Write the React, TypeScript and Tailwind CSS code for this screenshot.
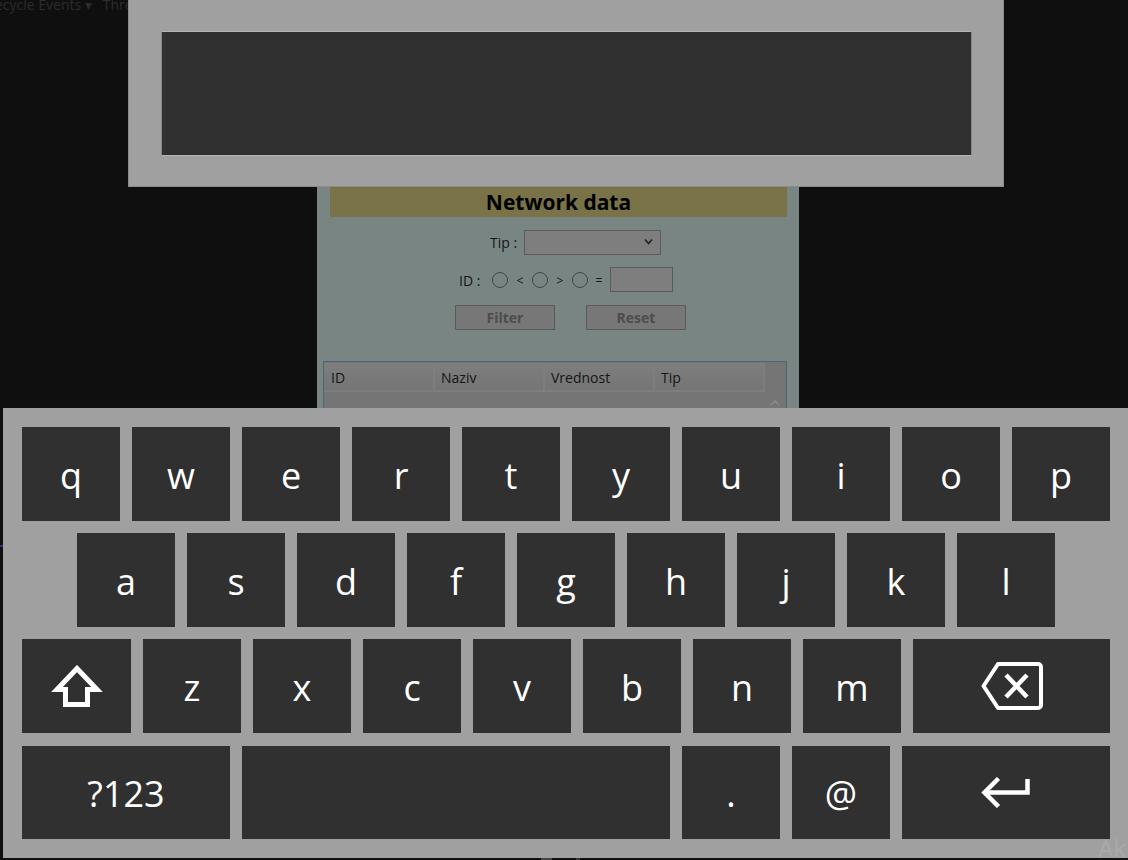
// App.tsx
// Network data page with a touch keyboard and dialog over it

import React from "react";

const ROW_1 = ["q", "w", "e", "r", "t", "y", "u", "i", "o", "p"];
const ROW_2 = ["a", "s", "d", "f", "g", "h", "j", "k", "l"];
const ROW_3 = ["z", "x", "c", "v", "b", "n", "m"];
const COLUMNS = [
  { label: "ID", width: "w-[111px] pl-[7px]" },
  { label: "Naziv", width: "w-[110px] pl-[6px]" },
  { label: "Vrednost", width: "w-[110px] pl-[6px]" },
  { label: "Tip", width: "w-[110px] pl-[6px]" },
];

function Key({
  className,
  children,
}: {
  className?: string;
  children?: React.ReactNode;
}) {
  return (
    <div
      className={`flex h-full items-center justify-center bg-[#303030] text-[36px] leading-none text-white ${
        className ?? "w-[98px] pt-[3px]"
      }`}
    >
      {children}
    </div>
  );
}

function ShiftIcon() {
  return (
    <svg width="52" height="42" viewBox="0 0 52 42" fill="none">
      <path
        d="M26 3.5 L6 24.5 H14.5 V39.5 H36.5 V24.5 H46 Z"
        stroke="white"
        strokeWidth="5"
        strokeLinejoin="miter"
      />
    </svg>
  );
}

function BackspaceIcon() {
  return (
    <svg width="62" height="48" viewBox="0 0 62 48" fill="none">
      <path
        d="M17 2 H57 A3 3 0 0 1 60 5 V43 A3 3 0 0 1 57 46 H17 L2.5 24 Z"
        stroke="white"
        strokeWidth="4"
        strokeLinejoin="round"
      />
      <path d="M25 13 L46 35 M46 13 L25 35" stroke="white" strokeWidth="4.5" />
    </svg>
  );
}

function EnterIcon() {
  return (
    <svg className="mr-[2px]" width="49" height="31" viewBox="0 0 49 31" fill="none">
      <path d="M46.5 2 V15.5 H4" stroke="white" strokeWidth="4.5" />
      <path d="M17.5 1.5 L3.5 15.5 L17.5 29.5" stroke="white" strokeWidth="4.5" />
    </svg>
  );
}

function NetworkCard() {
  return (
    <div className="ml-[317px] mt-[187px] h-[221px] w-[482px] bg-[#788583] pl-[6px] pr-[12px] font-['Open_Sans',sans-serif] text-[#151515]">
      <div className="ml-[7px] flex h-[30px] w-[457px] items-center justify-center bg-[#7a7347] pt-[1px] text-[21px] font-bold text-black">
        Network data
      </div>

      <div className="ml-[167px] mt-[13px] flex h-[25px] items-center text-[14px]">
        <span className="w-[34px]">Tip :</span>
        <div className="relative h-[25px] w-[137px] border border-[#5a5a5a] bg-[#7e7e7e]">
          <svg
            className="absolute right-[7px] top-[7px]"
            width="9"
            height="8"
            viewBox="0 0 9 8"
            fill="none"
          >
            <path d="M1 1.5 L4.5 5.5 L8 1.5" stroke="#222" strokeWidth="1.6" />
          </svg>
        </div>
      </div>

      <div className="ml-[136px] mt-[12px] flex h-[25px] items-center text-[14px]">
        <span className="w-[33px] pt-[1px]">ID :</span>
        <span className="h-[16px] w-[16px] rounded-full border border-[#444]" />
        <span className="w-[24px] pt-[3px] text-center text-[12px]">&lt;</span>
        <span className="h-[16px] w-[16px] rounded-full border border-[#444]" />
        <span className="w-[24px] pt-[3px] text-center text-[12px]">&gt;</span>
        <span className="h-[16px] w-[16px] rounded-full border border-[#444]" />
        <span className="w-[22px] pt-[3px] text-center text-[12px]">=</span>
        <div className="h-[25px] w-[63px] border border-[#5a5a5a] bg-[#7e7e7e]" />
      </div>

      <div className="ml-[132px] mt-[13px] flex gap-[31px]">
        <div className="flex h-[25px] w-[100px] items-center justify-center border border-[#5a5a5a] bg-[#777] text-[14px] font-bold text-[#4c4c4c]">
          Filter
        </div>
        <div className="flex h-[25px] w-[100px] items-center justify-center border border-[#5a5a5a] bg-[#777] text-[14px] font-bold text-[#4c4c4c]">
          Reset
        </div>
      </div>

      <div className="relative mt-[31px] h-[60px] w-[464px] border border-[#4a6478] bg-[#757575] pt-[1px]">
        <div className="flex h-[29px] w-[441px] border-b-2 border-[#7e7e7e] bg-gradient-to-b from-[#7e7e7e] to-[#757575] text-[14px]">
          {COLUMNS.map((c) => (
            <div
              key={c.label}
              className={`flex items-center border-r-2 border-[#7e7e7e] pt-[1px] ${c.width}`}
            >
              {c.label}
            </div>
          ))}
        </div>
        <svg
          className="absolute right-[6px] top-[38px]"
          width="10"
          height="6"
          viewBox="0 0 10 6"
          fill="none"
        >
          <path d="M1 5 L5 1 L9 5" stroke="#8c8c8c" strokeWidth="1.6" />
        </svg>
      </div>
    </div>
  );
}

export default function App() {
  return (
    <div className="relative h-[860px] w-[1128px] overflow-hidden bg-[#0f0f0f] font-['Open_Sans',sans-serif]">
      <div className="absolute left-[-5px] top-[-6px] whitespace-nowrap text-[14px] text-[#2c2c2c]">
        ecycle Events ▾&nbsp;&nbsp; Thre
      </div>

      <NetworkCard />

      {/* dialog over the page */}
      <div className="absolute left-[128px] top-0 h-[187px] w-[876px] border-b border-l border-r border-[#8c8c8c] bg-[#a0a0a0] pl-[32px] pt-[31px]">
        <div className="h-[125px] w-[811px] border border-x-[#858585] border-y-[#b4b4b4] bg-[#303030]" />
      </div>

      {/* touch keyboard */}
      <div className="absolute left-[3px] top-[408px] flex h-[450px] w-[1125px] flex-col bg-[#a0a0a0] pl-[19px] pt-[19px]">
        <div className="flex h-[94px] gap-[12px]">
          {ROW_1.map((k) => (
            <Key key={k}>{k}</Key>
          ))}
        </div>
        <div className="ml-[55px] mt-[12px] flex h-[94px] gap-[12px]">
          {ROW_2.map((k) => (
            <Key key={k}>{k}</Key>
          ))}
        </div>
        <div className="mt-[12px] flex h-[94px] gap-[12px]">
          <Key className="w-[109px]">
            <ShiftIcon />
          </Key>
          {ROW_3.map((k) => (
            <Key key={k}>{k}</Key>
          ))}
          <Key className="w-[197px]">
            <BackspaceIcon />
          </Key>
        </div>
        <div className="mt-[13px] flex h-[93px] gap-[12px]">
          <Key className="w-[208px] pt-[3px]">?123</Key>
          <Key className="w-[428px]" />
          <Key>.</Key>
          <Key>@</Key>
          <Key className="w-[208px]">
            <EnterIcon />
          </Key>
        </div>
      </div>
      <div className="absolute left-[1098px] top-[830px] text-[24px] text-[#aaaaaa]">
        Ak
      </div>

      {/* page bits that show around the keyboard */}
      <div className="absolute left-0 top-[545px] h-[2px] w-[3px] bg-[#3a2f6e]" />
      <div className="absolute left-[541px] top-[858px] h-[2px] w-[11px] bg-[#444444]" />
      <div className="absolute left-[576px] top-[858px] h-[2px] w-[4px] bg-[#3a3a3a]" />
    </div>
  );
}
